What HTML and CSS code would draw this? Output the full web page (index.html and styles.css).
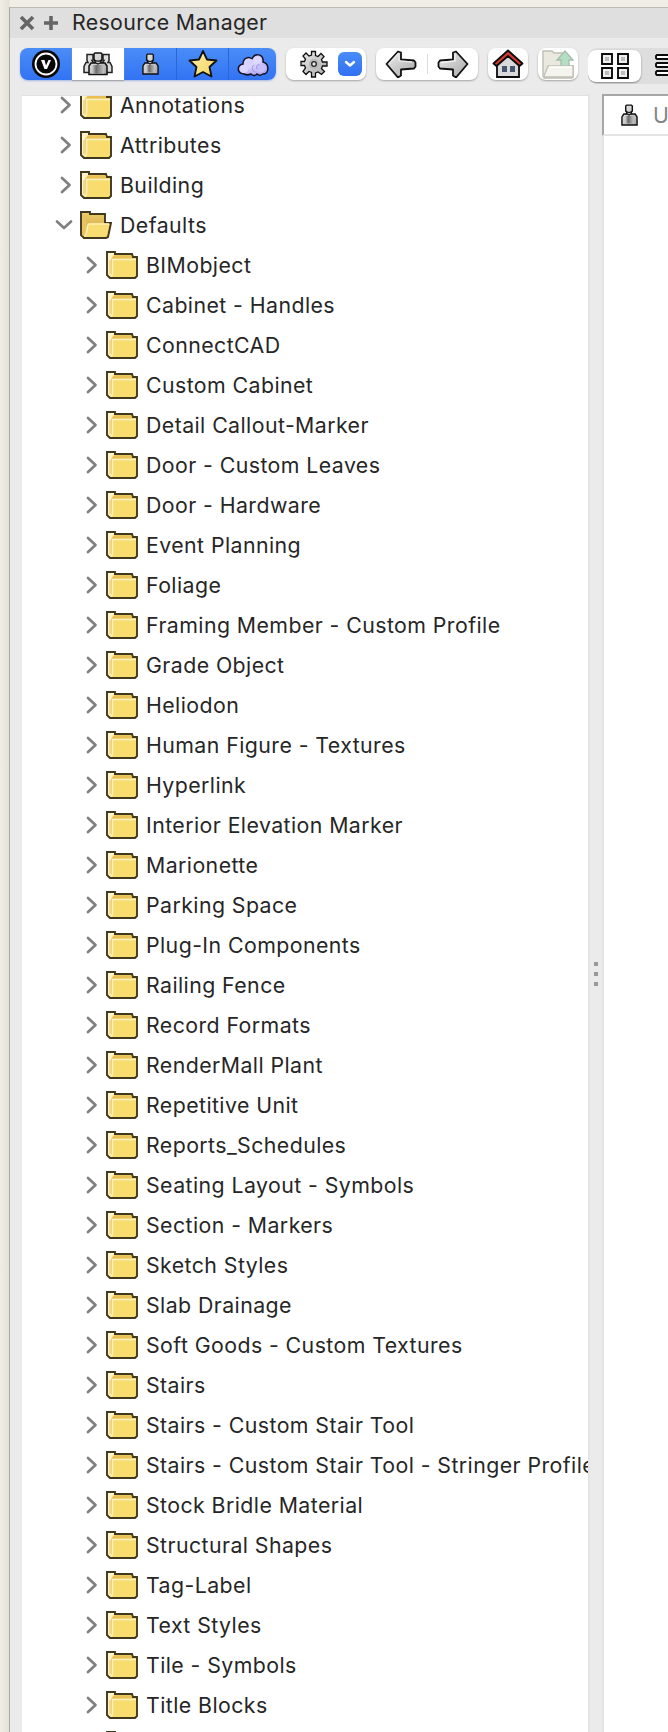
FILE: index.html
```html
<!DOCTYPE html>
<html lang="en">
<head>
    <meta charset="UTF-8">
    <meta name="viewport" content="width=device-width, initial-scale=1.0">
    <link rel="stylesheet" href="styles.css">
    <title>Resource Manager</title>
</head>
<body>
    <!-- Shared icons -->
    <svg class="defs" width="0" height="0">
        <defs>
            <linearGradient id="gray" x1="0" y1="0" x2="1" y2="1">
                <stop offset="0" stop-color="#eeeeee"/>
                <stop offset="1" stop-color="#a6a6a6"/>
            </linearGradient>
            <linearGradient id="body" x1="0" y1="0" x2="1" y2="0">
                <stop offset="0" stop-color="#d0d0d0"/>
                <stop offset="0.35" stop-color="#6c6c6c"/>
                <stop offset="1" stop-color="#c4c4c4"/>
            </linearGradient>
            <linearGradient id="gold" x1="0" y1="0" x2="1" y2="1">
                <stop offset="0" stop-color="#fff0ae"/>
                <stop offset="1" stop-color="#f4d35c"/>
            </linearGradient>
            <linearGradient id="inside" x1="0" y1="0" x2="0" y2="1">
                <stop offset="0" stop-color="#eccb6a"/>
                <stop offset="1" stop-color="#cda339"/>
            </linearGradient>
            <radialGradient id="lilac" cx="0.4" cy="0.3" r="0.7">
                <stop offset="0" stop-color="#ebe6ff"/>
                <stop offset="1" stop-color="#b2a8f2"/>
            </radialGradient>
            <symbol id="folder" viewBox="0 0 32 28">
                <path d="M1 1h8v2h17l1 3h4v19l-2 2H4l-3-3z" fill="#f1cf67" stroke="#40371f" stroke-width="1.900"/>
                <path d="M2 2h6v2L5 8v14c0 2-.5 3-1 3s-2-1-2-3z" fill="#fff5ca"/>
                <path d="M8 4.500h17l1 3H6v14l-1-13z" fill="#e9bf53"/>
                <path d="M6 8.500h24V24l-2 2H4c2-1 2-2 2-4z" fill="#f8dc6d"/>
                <path d="M30 8.500H6.500V22c0 2-.6 3-1.600 3.500" fill="none" stroke="#fff3bb" stroke-width="1.500"/>
                <path d="M4 9v14" fill="none" stroke="#ecca72" stroke-width="1.300"/>
            </symbol>
            <symbol id="folder-open" viewBox="0 0 32 28">
                <path d="M1 1h9v2h15v9h6l-3 14-2 1H4l-3-3z" fill="url(#inside)" stroke="#40371f" stroke-width="1.900"/>
                <path d="M2 3v21l3 2 2-14z" fill="#e8c562"/>
                <path d="M8 12.500h21.500L27 25l-2 1H4c2-3 2-7 4-13.500z" fill="#f8dd72"/>
                <path d="M29 13H9c-3 2-1 9-4.500 12.500" fill="none" stroke="#fff1b5" stroke-width="1.500"/>
            </symbol>
            <symbol id="right" viewBox="0 0 12 18">
                <path d="M2 2l7.500 7L2 16" fill="none" stroke="#808080" stroke-width="2.700" stroke-linecap="round" stroke-linejoin="round"/>
            </symbol>
            <symbol id="down" viewBox="0 0 18 12">
                <path d="M2 2.500l7 6.500 7-6.500" fill="none" stroke="#808080" stroke-width="2.700" stroke-linecap="round" stroke-linejoin="round"/>
            </symbol>
            <symbol id="user" viewBox="0 0 18 24">
                <path d="M6 1.500h5l1 1v5L11 9v2h4l2 3v8.500H1V14l2-3h3V9L5 7.500v-5z" fill="url(#gray)" stroke="#111" stroke-width="1.500"/>
                <path d="M4.500 13h9v8h-9z" fill="url(#body)"/>
                <path d="M5 8c2 1.500 5 1.500 7 0M6 10.500l2.500 1.500 2.500-1.500" fill="none" stroke="#111" stroke-width="1.200"/>
            </symbol>
        </defs>
    </svg>

    <div class="window">
        <div class="titlebar">
            <svg class="winIcons" width="40" height="16" viewBox="0 0 40 16">
                <path d="M2 2l12 12M14 2L2 14M25 8h14M32 1v14" fill="none" stroke="#656565" stroke-width="3.600"/>
            </svg>
            <span class="title">Resource Manager</span>
        </div>

        <div class="toolbar">
            <div class="libraries">
                <div class="lib">
                    <svg width="30" height="30" viewBox="0 0 30 30">
                        <circle cx="15" cy="15" r="14" fill="#080808"/>
                        <circle cx="15" cy="15" r="10.500" fill="none" stroke="#fff" stroke-width="1.800"/>
                        <path d="M10 11h3.500l1.500 5.500 2.500-5.500h2.500L16 20h-2.500z" fill="#fff"/>
                    </svg>
                </div>
                <div class="lib active">
                    <svg width="30" height="24" viewBox="0 0 30 24">
                        <path d="M4 2.500h6v6H9l2 3v9H1v-6l2-4h2l-1-2zM26 2.500h-6v6h1l-2 3v9h10v-6l-2-4h-2l1-2z" fill="#dedede" stroke="#222" stroke-width="1.500"/>
                        <path d="M12 1h6l1 1v5l-1 2v2h4l2 3v8.500H6V14l2-3h4V9l-1-2V2z" fill="url(#gray)" stroke="#111" stroke-width="1.500"/>
                        <path d="M9 13h12v8.500H9z" fill="url(#body)"/>
                        <path d="M11 8c2 1.500 6 1.500 8 0M12 10.500l3 1.500 3-1.500" fill="none" stroke="#111" stroke-width="1.200"/>
                    </svg>
                </div>
                <div class="lib"><svg width="17" height="24"><use href="#user"/></svg></div>
                <div class="lib line">
                    <svg width="30" height="30" viewBox="0 0 30 30">
                        <path d="M15 2l4 8.500 9.500 1-7 6.500 2 9.500L15 23l-8.500 4.500 2-9.500-7-6.500 9.500-1z" fill="url(#gold)" stroke="#111" stroke-width="1.800" stroke-linejoin="round"/>
                    </svg>
                </div>
                <div class="lib line last">
                    <svg class="cloud" width="32" height="24" viewBox="0 0 32 24">
                        <path d="M7 21c-8-1-7-9-1-10 0-6 6-8 9-5 3-7 12-5 11 3 7 2 6 12 0 12-3 2-5 1-6 0-2 2-4 2-6 0-2 1-5 1-7 0z" fill="url(#lilac)" stroke="#161329" stroke-width="1.500"/>
                        <circle cx="13" cy="11" r="5" fill="#d8d2ff"/>
                        <circle cx="20" cy="7.500" r="4" fill="#ddd8ff"/>
                        <circle cx="24" cy="15" r="4.500" fill="#c7bff9"/>
                        <circle cx="7" cy="16" r="4" fill="#dcd6ff"/>
                        <path d="M17 12c-3 2-2 6 1 7M22 11c-2 1-3 3-2 5" fill="none" stroke="#9c91e5"/>
                    </svg>
                </div>
            </div>

            <div class="group settings">
                <svg width="28" height="28" viewBox="0 0 28 28">
                    <path d="M11.500 1.500h4v4l2.500 1 3-3 3 3-2.500 3 1 2.500H27v4h-4.500l-1 2.500 3 3-3 3-3.500-2.500-2.500 1V27h-4v-4.500L9 21.500l-3 3-3-3L5.500 18l-1-2.500H1v-4h3.500l1-2.500L3 6l3-3 3 3 2.500-1z" fill="url(#gray)" stroke="#111" stroke-width="1.300"/>
                    <circle cx="14" cy="14" r="5" fill="#b9b9b9"/>
                    <circle cx="14" cy="14" r="2.300" fill="#e5e5e5" stroke="#222" stroke-width="1.300"/>
                </svg>
                <div class="dropdown">
                    <svg width="12" height="8" viewBox="0 0 12 8">
                        <path d="M2 2l4 3.500L10 2" fill="none" stroke="#fff" stroke-width="2.400" stroke-linecap="round" stroke-linejoin="round"/>
                    </svg>
                </div>
            </div>

            <div class="group arrows">
                <svg width="32" height="28" viewBox="0 0 32 28">
                    <path d="M1.500 14L13 1.500l3 1v7l13 1 1.500 2v4l-1.500 2-13 1v6l-3 2z" fill="url(#gray)" stroke="#111" stroke-width="1.800" stroke-linejoin="round"/>
                    <path d="M4 14L13 4l1 1v6l13 1" fill="none" stroke="#e8e8e8" stroke-width="1.300"/>
                </svg>
                <div class="separator"></div>
                <svg width="32" height="28" viewBox="0 0 32 28">
                    <path d="M30.500 14L19 1.500l-3 1v7l-13 1-1.500 2v4l1.500 2 13 1v6l3 2z" fill="url(#gray)" stroke="#111" stroke-width="1.800" stroke-linejoin="round"/>
                    <path d="M18 4v7L4 12.500" fill="none" stroke="#f2f2f2" stroke-width="1.300"/>
                </svg>
            </div>

            <div class="group single">
                <svg width="32" height="30" viewBox="0 0 32 30">
                    <path d="M5 14L16 5l11 9v14H5z" fill="#d9d9dc" stroke="#0b0b0b" stroke-width="1.800"/>
                    <path d="M16 1.500L1.500 14.500l3 2.500L16 7l11.500 10 3-2.500z" fill="#d73932" stroke="#0b0b0b" stroke-width="1.800" stroke-linejoin="round"/>
                    <path d="M10 17h5v6h-5zM18 17h5v6h-5z" fill="#45566c"/>
                </svg>
            </div>

            <div class="group single">
                <svg width="33" height="29" viewBox="0 0 33 29">
                    <path d="M1 1h9l2 2h12v13h7v11l-1 1H2l-1-2z" fill="#e9e9e0" stroke="#c0c0b7" stroke-width="1.500"/>
                    <path d="M23 1l8 9h-4v8h-8v-8h-4z" fill="#b5dfc4" stroke="#a6bcac" stroke-width="1.300"/>
                    <path d="M2 26l4-10h25v11H3z" fill="#f5f5ef" stroke="#c0c0b7" stroke-width="1.300"/>
                    <path d="M7 17h23" stroke="#fff" stroke-width="1.500"/>
                </svg>
            </div>

            <div class="views">
                <div class="view">
                    <svg width="28" height="26" viewBox="0 0 28 26">
                        <path d="M1 1h10v10H1zM17 1h10v10H17zM1 15h10v10H1zM17 15h10v10H17z" fill="#eee" stroke="#0b0b0b" stroke-width="1.900"/>
                        <path d="M4 4h4v4H4zM20 4h4v4h-4zM4 18h4v4H4zM20 18h4v4h-4z" fill="#bcbcbc"/>
                    </svg>
                </div>
                <svg class="listIcon" width="28" height="24" viewBox="0 0 28 24">
                    <path d="M2 1h25v4H2L1 4V2zM2 9h25v4H2l-1-1v-2zM2 17h25v4H2l-1-1v-2z" fill="#fff" stroke="#0b0b0b" stroke-width="1.900"/>
                </svg>
            </div>
        </div>

        <div class="content">
            <div class="tree">
                <div class="row parent"><svg class="arrow"><use href="#right"/></svg><svg class="folder"><use href="#folder"/></svg>Annotations</div>
                <div class="row parent"><svg class="arrow"><use href="#right"/></svg><svg class="folder"><use href="#folder"/></svg>Attributes</div>
                <div class="row parent"><svg class="arrow"><use href="#right"/></svg><svg class="folder"><use href="#folder"/></svg>Building</div>
                <div class="row parent open"><svg class="arrow"><use href="#down"/></svg><svg class="folder"><use href="#folder-open"/></svg>Defaults</div>
                <div class="row"><svg class="arrow"><use href="#right"/></svg><svg class="folder"><use href="#folder"/></svg>BIMobject</div>
                <div class="row"><svg class="arrow"><use href="#right"/></svg><svg class="folder"><use href="#folder"/></svg>Cabinet - Handles</div>
                <div class="row"><svg class="arrow"><use href="#right"/></svg><svg class="folder"><use href="#folder"/></svg>ConnectCAD</div>
                <div class="row"><svg class="arrow"><use href="#right"/></svg><svg class="folder"><use href="#folder"/></svg>Custom Cabinet</div>
                <div class="row"><svg class="arrow"><use href="#right"/></svg><svg class="folder"><use href="#folder"/></svg>Detail Callout-Marker</div>
                <div class="row"><svg class="arrow"><use href="#right"/></svg><svg class="folder"><use href="#folder"/></svg>Door - Custom Leaves</div>
                <div class="row"><svg class="arrow"><use href="#right"/></svg><svg class="folder"><use href="#folder"/></svg>Door - Hardware</div>
                <div class="row"><svg class="arrow"><use href="#right"/></svg><svg class="folder"><use href="#folder"/></svg>Event Planning</div>
                <div class="row"><svg class="arrow"><use href="#right"/></svg><svg class="folder"><use href="#folder"/></svg>Foliage</div>
                <div class="row"><svg class="arrow"><use href="#right"/></svg><svg class="folder"><use href="#folder"/></svg>Framing Member - Custom Profile</div>
                <div class="row"><svg class="arrow"><use href="#right"/></svg><svg class="folder"><use href="#folder"/></svg>Grade Object</div>
                <div class="row"><svg class="arrow"><use href="#right"/></svg><svg class="folder"><use href="#folder"/></svg>Heliodon</div>
                <div class="row"><svg class="arrow"><use href="#right"/></svg><svg class="folder"><use href="#folder"/></svg>Human Figure - Textures</div>
                <div class="row"><svg class="arrow"><use href="#right"/></svg><svg class="folder"><use href="#folder"/></svg>Hyperlink</div>
                <div class="row"><svg class="arrow"><use href="#right"/></svg><svg class="folder"><use href="#folder"/></svg>Interior Elevation Marker</div>
                <div class="row"><svg class="arrow"><use href="#right"/></svg><svg class="folder"><use href="#folder"/></svg>Marionette</div>
                <div class="row"><svg class="arrow"><use href="#right"/></svg><svg class="folder"><use href="#folder"/></svg>Parking Space</div>
                <div class="row"><svg class="arrow"><use href="#right"/></svg><svg class="folder"><use href="#folder"/></svg>Plug-In Components</div>
                <div class="row"><svg class="arrow"><use href="#right"/></svg><svg class="folder"><use href="#folder"/></svg>Railing Fence</div>
                <div class="row"><svg class="arrow"><use href="#right"/></svg><svg class="folder"><use href="#folder"/></svg>Record Formats</div>
                <div class="row"><svg class="arrow"><use href="#right"/></svg><svg class="folder"><use href="#folder"/></svg>RenderMall Plant</div>
                <div class="row"><svg class="arrow"><use href="#right"/></svg><svg class="folder"><use href="#folder"/></svg>Repetitive Unit</div>
                <div class="row"><svg class="arrow"><use href="#right"/></svg><svg class="folder"><use href="#folder"/></svg>Reports_Schedules</div>
                <div class="row"><svg class="arrow"><use href="#right"/></svg><svg class="folder"><use href="#folder"/></svg>Seating Layout - Symbols</div>
                <div class="row"><svg class="arrow"><use href="#right"/></svg><svg class="folder"><use href="#folder"/></svg>Section - Markers</div>
                <div class="row"><svg class="arrow"><use href="#right"/></svg><svg class="folder"><use href="#folder"/></svg>Sketch Styles</div>
                <div class="row"><svg class="arrow"><use href="#right"/></svg><svg class="folder"><use href="#folder"/></svg>Slab Drainage</div>
                <div class="row"><svg class="arrow"><use href="#right"/></svg><svg class="folder"><use href="#folder"/></svg>Soft Goods - Custom Textures</div>
                <div class="row"><svg class="arrow"><use href="#right"/></svg><svg class="folder"><use href="#folder"/></svg>Stairs</div>
                <div class="row"><svg class="arrow"><use href="#right"/></svg><svg class="folder"><use href="#folder"/></svg>Stairs - Custom Stair Tool</div>
                <div class="row"><svg class="arrow"><use href="#right"/></svg><svg class="folder"><use href="#folder"/></svg>Stairs - Custom Stair Tool - Stringer Profile</div>
                <div class="row"><svg class="arrow"><use href="#right"/></svg><svg class="folder"><use href="#folder"/></svg>Stock Bridle Material</div>
                <div class="row"><svg class="arrow"><use href="#right"/></svg><svg class="folder"><use href="#folder"/></svg>Structural Shapes</div>
                <div class="row"><svg class="arrow"><use href="#right"/></svg><svg class="folder"><use href="#folder"/></svg>Tag-Label</div>
                <div class="row"><svg class="arrow"><use href="#right"/></svg><svg class="folder"><use href="#folder"/></svg>Text Styles</div>
                <div class="row"><svg class="arrow"><use href="#right"/></svg><svg class="folder"><use href="#folder"/></svg>Tile - Symbols</div>
                <div class="row"><svg class="arrow"><use href="#right"/></svg><svg class="folder"><use href="#folder"/></svg>Title Blocks</div>
                <div class="row"><svg class="arrow"><use href="#right"/></svg><svg class="folder"><use href="#folder"/></svg></div>
            </div>
            <div class="splitter">
                <span class="dot"></span>
                <span class="dot"></span>
                <span class="dot"></span>
            </div>
            <div class="preview">
                <div class="path">
                    <svg width="17" height="24"><use href="#user"/></svg>
                    <span>User</span>
                </div>
            </div>
        </div>
    </div>
</body>
</html>
```
FILE: styles.css
```css
*{
    box-sizing: border-box;
}
body{
    margin: 0;
    height: 1732px;
    padding: 7px 0 0 9px;
    overflow: hidden;
    background: linear-gradient(90deg, #f0ede5, #e5e2da 9px, #f1eee6 10px);
    font-family: Inter, "Liberation Sans", sans-serif;
    font-size: 21.3px;
    color: #262626;
}
svg{
    display: block;
    flex-shrink: 0;
}
.defs{
    position: absolute;
}
.window{
    width: 659px;
    height: 1725px;
    display: flex;
    flex-direction: column;
    overflow: hidden;
    background-color: #ebebeb;
    border-left: 1px solid #aaa9a6;
    border-top: 1px solid #bdbbb5;
}
.titlebar{
    height: 30px;
    flex-shrink: 0;
    display: flex;
    align-items: center;
    padding-left: 9px;
    background-color: #dfdfdf;
}
.title{
    margin-left: 13px;
    padding-bottom: 2px;
    letter-spacing: 0.35px;
    white-space: nowrap;
}
.toolbar{
    height: 56px;
    flex-shrink: 0;
    display: flex;
    align-items: flex-start;
    padding: 10px 0 0 10px;
}
.libraries{
    width: 256px;
    height: 32px;
    display: flex;
    border-radius: 8px;
    background: linear-gradient(#4a8df7, #3273f3);
    box-shadow: 0 1px 2px rgba(60, 110, 220, 0.4);
}
.lib{
    width: 52px;
    flex-shrink: 0;
    display: flex;
    justify-content: center;
    align-items: center;
}
.last{
    width: 48px;
}
.active{
    background-color: white;
    box-shadow: 0 1px 1px #a9a9a9;
}
.line{
    border-left: 1px solid #2b65dc;
}
.cloud{
    margin-top: 2px;
}
.group{
    height: 32px;
    display: flex;
    align-items: center;
    border-radius: 8px;
    background-color: white;
    box-shadow: 0 1px 2px rgba(0, 0, 0, 0.3);
    margin-left: 10px;
}
.settings{
    width: 80px;
    justify-content: space-between;
    padding: 0 4px 0 14px;
}
.dropdown{
    width: 24px;
    height: 24px;
    display: flex;
    justify-content: center;
    align-items: center;
    border-radius: 6px;
    background: linear-gradient(#4a8df7, #3070f2);
}
.arrows{
    width: 102px;
    justify-content: space-between;
    padding: 0 9px;
}
.separator{
    width: 1px;
    height: 20px;
    background-color: #dcdcdc;
}
.single{
    width: 40px;
    justify-content: center;
}
.views{
    flex: 1;
    height: 36px;
    display: flex;
    align-items: center;
    margin-left: 10px;
    border-radius: 9px 0 0 9px;
    background-color: #dedede;
    overflow: hidden;
}
.view{
    width: 53px;
    height: 32px;
    flex-shrink: 0;
    display: flex;
    justify-content: center;
    align-items: center;
    border-radius: 8px;
    background-color: white;
    box-shadow: 0 1px 2px rgba(0, 0, 0, 0.4);
}
.listIcon{
    margin-left: 14px;
}
.content{
    flex: 1;
    min-height: 0;
    display: flex;
    padding-left: 12px;
}
/* first row is scrolled partly under the top edge */
.tree{
    width: 566px;
    margin-top: 2px;
    flex-shrink: 0;
    display: flex;
    flex-direction: column;
    justify-content: flex-end;
    overflow: hidden;
    background-color: white;
    box-shadow: 0 -1px 0 #e2e2e2;
    margin-bottom: -33px;
}
.row{
    height: 40px;
    flex-shrink: 0;
    display: flex;
    align-items: center;
    padding-left: 64px;
    letter-spacing: 0.43px;
    white-space: nowrap;
}
.parent{
    padding-left: 38px;
}
.arrow{
    width: 12px;
    height: 18px;
}
.folder{
    width: 32px;
    height: 28px;
    margin: 0 8px;
}
.open{
    padding-left: 33px;
}
.open .arrow{
    width: 18px;
    height: 12px;
}
.open .folder{
    margin-left: 7px;
}
.splitter{
    width: 16px;
    flex-shrink: 0;
    display: flex;
    flex-direction: column;
    justify-content: center;
    align-items: center;
    gap: 6px;
    padding-top: 122px;
    border-left: 2px solid #e4e4e4;
    border-right: 2px solid #e4e4e4;
}
.dot{
    width: 4px;
    height: 4px;
    background-color: #999;
}
.preview{
    flex: 1;
    min-width: 0;
    background-color: white;
}
.path{
    height: 42px;
    display: flex;
    align-items: center;
    gap: 15px;
    margin-left: -2px;
    padding-left: 17px;
    background-color: white;
    border-top: 2px solid #a7a7a7;
    border-left: 2px solid #a7a7a7;
    border-bottom: 2px solid #e5e5e5;
    color: #858585;
}
```
